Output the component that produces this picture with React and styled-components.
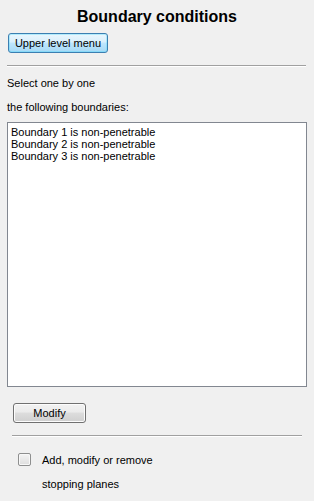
import React from "react";
import styled, { createGlobalStyle } from "styled-components";

const Global = createGlobalStyle`
  html, body { margin: 0; padding: 0; background: #f0f0f0; }
  body { width: 314px; height: 501px; overflow: hidden; font-family: "Liberation Sans", Arial, sans-serif; font-size: 11px; color: #000; }
`;

const Page = styled.div`
  display: flex;
  flex-direction: column;
  width: 314px;
  height: 501px;
  background: #f0f0f0;
`;

const Title = styled.h1`
  margin: 0;
  height: 33px;
  line-height: 34px;
  text-align: center;
  font-size: 16px;
  font-weight: bold;
  font-family: "Liberation Sans", Arial, sans-serif;
`;

const Row = styled.div`
  display: flex;
  padding-left: ${(p) => p.$indent || 0}px;
  margin-top: ${(p) => p.$top || 0}px;
`;

const Button = styled.button`
  box-sizing: border-box;
  width: ${(p) => p.$w}px;
  height: 20px;
  padding: 0 0 1px;
  font-family: "Liberation Sans", Arial, sans-serif;
  font-size: 11px;
  color: #000;
  border-radius: 3px;
  border: 1px solid ${(p) => (p.$focused ? "#3c7fb1" : "#707070")};
  background: ${(p) =>
    p.$focused
      ? "linear-gradient(#eaf6fd 0%, #d9f0fc 45%, #bee6fd 50%, #a7d9f5 100%)"
      : "linear-gradient(#f2f2f2 0%, #ebebeb 45%, #dddddd 50%, #cfcfcf 100%)"};
  box-shadow: inset 0 0 0 1px ${(p) => (p.$focused ? "#48d7fb55" : "#fcfcfc")};
`;

const Divider = styled.hr`
  margin: ${(p) => p.$top}px ${(p) => p.$right}px 0 ${(p) => p.$left}px;
  border: 0;
  border-top: 1px solid #a0a0a0;
  border-bottom: 1px solid #ffffff;
  height: 0;
`;

const Label = styled.div`
  padding-left: ${(p) => p.$indent || 7}px;
  margin-top: ${(p) => p.$top || 0}px;
  height: 14px;
  line-height: 14px;
`;

const List = styled.div`
  box-sizing: border-box;
  margin: 8px 7px 0 7px;
  width: 300px;
  height: 265px;
  background: #fff;
  border: 1px solid #828790;
  padding: 3px 3px;
`;

const Item = styled.div`
  line-height: 12px;
  height: 12px;
  white-space: nowrap;
`;

const CheckRow = styled.div`
  display: flex;
  align-items: center;
  gap: 11px;
  padding-left: 18px;
  margin-top: 16px;
`;

const Box = styled.span`
  box-sizing: border-box;
  width: 13px;
  height: 13px;
  border: 1px solid #8e8f8f;
  border-radius: 2px;
  background: linear-gradient(#f4f4f4, #dedede);
  box-shadow: inset 0 0 0 1px #f8f8f8;
`;

export default function App() {
  return (
    <Page>
      <Global />
      <Title>Boundary conditions</Title>
      <Row $indent={8}>
        <Button $w={100} $focused>Upper level menu</Button>
      </Row>
      <Divider $top={12} $left={7} $right={8} />
      <Label $top={9}>Select one by one</Label>
      <Label $top={10}>the following boundaries:</Label>
      <List>
        <Item>Boundary 1 is non-penetrable</Item>
        <Item>Boundary 2 is non-penetrable</Item>
        <Item>Boundary 3 is non-penetrable</Item>
      </List>
      <Row $indent={13} $top={16}>
        <Button $w={73}>Modify</Button>
      </Row>
      <Divider $top={12} $left={12} $right={12} />
      <CheckRow>
        <Box />
        <span>Add, modify or remove</span>
      </CheckRow>
      <Label $indent={42} $top={11}>stopping planes</Label>
    </Page>
  );
}
